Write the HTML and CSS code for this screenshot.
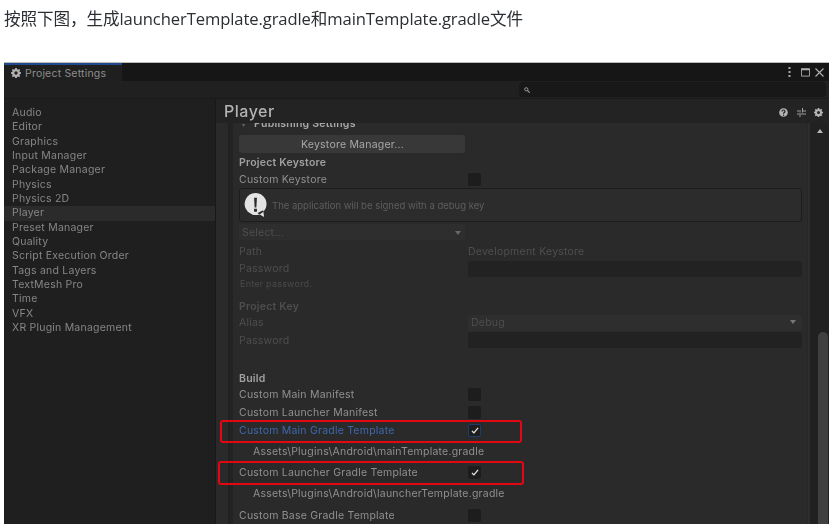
FILE: index.html
```html
<!DOCTYPE html>
<html lang="zh">
<head>
<meta charset="utf-8">
<title>Project Settings</title>
<link rel="stylesheet" href="styles.css">
</head>
<body>
<p class="intro">按照下图，生成launcherTemplate.gradle和mainTemplate.gradle文件</p>
<div class="window">
  <div class="tabbar">
    <div class="tab">
      <svg class="gear" viewBox="0 0 12 12"><path fill="#b4b4b4" fill-rule="evenodd" d="M5 0h2l.3 1.500 1.100.5 1.300-.9 1.300 1.400-.9 1.300.4 1.100 1.500.2v1.900l-1.500.3-.4 1.100.9 1.300-1.300 1.400-1.300-.9-1.100.4L7 12H5l-.3-1.400-1.100-.4-1.300.9L1 9.700l.9-1.300-.4-1.100L0 7V5.100l1.500-.3.4-1.100L1 2.500l1.300-1.400 1.300.9 1.100-.5zM6 4a2 2 0 1 0 0 4 2 2 0 0 0 0-4z"/></svg>
      <span>Project Settings</span>
    </div>
    <div class="winbtns">
      <svg class="kebab" viewBox="0 0 3 10"><path fill="#a8a8a8" d="M.5 0h2v2h-2zM.5 4h2v2h-2zM.5 8h2v2h-2z"/></svg>
      <svg class="maxi" viewBox="0 0 10 9"><path fill="none" stroke="#b0b0b0" d="M.5.500h9v8h-9z"/><path fill="#b0b0b0" d="M0 0h10v2H0z"/></svg>
      <svg class="closex" viewBox="0 0 9 9"><path fill="none" stroke="#b0b0b0" stroke-width="1.100" d="M.5.500l8 8M8.500.500l-8 8"/></svg>
    </div>
  </div>
  <div class="toolbar">
    <div class="search">
      <svg class="lens" viewBox="0 0 6 6"><circle cx="2.300" cy="2.300" r="1.600" fill="none" stroke="#999" stroke-width="1"/><path stroke="#999" stroke-width="1.100" d="M3.500 3.500L5.700 5.700"/></svg>
    </div>
  </div>
  <div class="panes">
    <nav class="sidebar">
      <div class="navitem">Audio</div>
      <div class="navitem">Editor</div>
      <div class="navitem">Graphics</div>
      <div class="navitem">Input Manager</div>
      <div class="navitem">Package Manager</div>
      <div class="navitem">Physics</div>
      <div class="navitem">Physics 2D</div>
      <div class="navitem selected">Player</div>
      <div class="navitem">Preset Manager</div>
      <div class="navitem">Quality</div>
      <div class="navitem">Script Execution Order</div>
      <div class="navitem">Tags and Layers</div>
      <div class="navitem">TextMesh Pro</div>
      <div class="navitem">Time</div>
      <div class="navitem">VFX</div>
      <div class="navitem">XR Plugin Management</div>
    </nav>
    <main class="main">
      <header class="head">
        <h1>Player</h1>
        <div class="headicons">
          <svg class="hicon" viewBox="0 0 9 9"><circle cx="4.500" cy="4.500" r="4.300" fill="#b4b4b4"/><path fill="none" stroke="#222" stroke-width="1.200" d="M3 3.500c0-2 3-2 3 0 0 1-1.500 1-1.500 2.200"/><path fill="#222" d="M4 6.600h1.100v1.100H4z"/></svg>
          <svg class="hicon" viewBox="0 0 9 9"><path stroke="#a0a0a0" stroke-width="1" fill="none" d="M0 3h4M6 3h3M5.500 0v4.500M0 6h2M4 6h5M3 4.500V9"/></svg>
          <svg class="hicon" viewBox="0 0 12 12"><path fill="#b4b4b4" fill-rule="evenodd" d="M5 0h2l.3 1.500 1.100.5 1.300-.9 1.300 1.400-.9 1.300.4 1.100 1.500.2v1.900l-1.500.3-.4 1.100.9 1.300-1.300 1.400-1.300-.9-1.100.4L7 12H5l-.3-1.400-1.100-.4-1.300.9L1 9.700l.9-1.300-.4-1.100L0 7V5.100l1.500-.3.4-1.100L1 2.500l1.300-1.400 1.300.9 1.100-.5zM6 4a2 2 0 1 0 0 4 2 2 0 0 0 0-4z"/></svg>
        </div>
      </header>
      <div class="body">
        <div class="content">
          <div class="rail"></div>
          <div class="form">
            <div class="pub"><span class="tri">▾</span><b>Publishing Settings</b></div>
            <div class="btn">Keystore Manager...</div>
            <div class="row strong">Project Keystore</div>
            <div class="row h17"><span class="label">Custom Keystore</span><span class="cb"></span></div>
            <div class="help">
              <svg class="bubble" viewBox="0 0 24 25"><path fill="#e4e4e4" d="M12 0a11.500 11.500 0 1 1 0 23c-1 0-2-.1-3-.4L4 19.500A11.500 11.500 0 0 1 12 0z M14 21l7 4-1-7z"/><path fill="#2a2a2a" d="M10.500 5h3l-.6 10h-1.800zM10.500 16.500h3v3h-3z"/></svg>
              <span>The application will be signed with a debug key</span>
            </div>
            <div class="select dim">Select...<i class="caret"></i></div>
            <div class="row dim gap-path"><span class="label">Path</span><span>Development Keystore</span></div>
            <div class="row h17 dim"><span class="label">Password</span><span class="input"></span></div>
            <div class="hint">Enter password.</div>
            <div class="row dim strong gap-key">Project Key</div>
            <div class="row h16 dim"><span class="label lifted">Alias</span><span class="drop">Debug<i class="caret"></i></span></div>
            <div class="row h16 dim gap-pw"><span class="label">Password</span><span class="input"></span></div>
            <div class="row strong gap-build">Build</div>
            <div class="row h17 gap-cmm"><span class="label">Custom Main Manifest</span><span class="cb"></span></div>
            <div class="row h17 gap-pw"><span class="label">Custom Launcher Manifest</span><span class="cb"></span></div>
            <div class="row marked">
              <span class="label blue">Custom Main Gradle Template</span>
              <span class="cb focus"><svg class="tick" viewBox="0 0 9 8"><path fill="none" stroke="#e4e4e4" stroke-width="1.500" d="M1 4.500l2.300 2.200L8 1"/></svg></span>
              <i class="redbox one"></i>
            </div>
            <div class="row path">Assets\Plugins\Android\mainTemplate.gradle</div>
            <div class="row marked">
              <span class="label">Custom Launcher Gradle Template</span>
              <span class="cb"><svg class="tick" viewBox="0 0 9 8"><path fill="none" stroke="#e4e4e4" stroke-width="1.500" d="M1 4.500l2.300 2.200L8 1"/></svg></span>
              <i class="redbox two"></i>
            </div>
            <div class="row path">Assets\Plugins\Android\launcherTemplate.gradle</div>
            <div class="row gap-base"><span class="label">Custom Base Gradle Template</span><span class="cb"></span></div>
          </div>
        </div>
        <div class="scroll">
          <svg class="up" viewBox="0 0 6 4"><path fill="#b8b8b8" d="M3 0l3 4H0z"/></svg>
          <div class="thumb"></div>
        </div>
      </div>
    </main>
  </div>
</div>
</body>
</html>
```

FILE: styles.css
```css
* { box-sizing: border-box; }
html, body { margin: 0; padding: 0; background: #fff; }
body { width: 830px; height: 526px; overflow: hidden; font-family: Inter, "Noto Sans CJK SC", sans-serif; }
.intro { margin: 0; height: 63px; padding: 10px 0 0 4px; font-size: 16.6px; line-height: 18px; color: #2b2f33; font-family: "Open Sans", "Noto Sans CJK SC", sans-serif; letter-spacing: -0.1px; filter: blur(.35px); }
.window { margin-left: 4px; width: 825px; height: 461px; background: #2a2a2a; display: flex; flex-direction: column; overflow: hidden; font-size: 10.5px; letter-spacing: .22px; color: #909090; filter: blur(.65px); box-shadow: 0 -1px 0 #bbb; }
.tabbar { height: 18px; flex: none; background: #161616; display: flex; justify-content: space-between; }
.tab { width: 118px; background: #1f1f1f; border-top: 2px solid #214a8e; padding-left: 7px; display: flex; align-items: center; gap: 4px; color: #8e8e8e; font-size: 10.5px; letter-spacing: .2px; }
.gear { width: 10px; height: 10px; }
.winbtns { display: flex; align-items: center; gap: 0; padding-right: 5px; }
.kebab { width: 3px; height: 10px; margin-right: 10px; }
.maxi { width: 9px; height: 9px; margin-right: 5px; }
.closex { width: 9px; height: 9px; }
.toolbar { height: 18px; flex: none; background: #202020; border-bottom: 1px solid #1a1a1a; display: flex; justify-content: flex-end; padding: 1px 3px 2px 0; }
.search { width: 307px; height: 15px; background: #181818; border-radius: 4px; padding-left: 5px; display: flex; align-items: center; }
.lens { width: 6px; height: 6px; }
.panes { flex: 1; display: flex; min-height: 0; }
.sidebar { width: 212px; flex: none; background: #1f1f1f; border-right: 1px solid #181818; padding-top: 7px; }
.navitem { height: 14.33px; line-height: 14.33px; padding-left: 8px; color: #868686; }
.navitem.selected { background: #2b2b2b; }
.main { flex: 1; min-width: 0; display: flex; flex-direction: column; }
.head { height: 24px; flex: none; background: #232323; display: flex; justify-content: space-between; align-items: center; padding: 0 6px 0 8px; }
.head h1 { margin: 0; font-size: 16px; font-weight: 500; letter-spacing: .5px; color: #b4b4b4; }
.headicons { display: flex; gap: 8.500px; align-items: center; padding-top: 3px; }
.hicon { width: 9px; height: 9px; }
.body { flex: 1; display: flex; min-height: 0; }
.content { flex: 1; min-width: 0; display: flex; background: #2a2a2a; }
.rail { width: 17px; flex: none; margin-left: 12px; border-left: 1px solid #1f1f1f; box-shadow: inset 4px 0 0 #232323; margin-right: -6px; }
.form { flex: 1; min-width: 0; padding-right: 4px; }
.pub { height: 7px; line-height: 2px; overflow: hidden; color: #a8a8a8; }
.pub b { font-weight: 600; }
.tri { display: inline-block; width: 7px; margin-left: 3px; margin-right: 5px; font-size: 6px; color: #666; }
.btn { width: 226px; height: 18px; margin-top: 5px; background: #383838; border-radius: 3px; text-align: center; line-height: 20px; color: #a8a8a8; padding-left: 1px; }
.row { height: 18px; display: flex; align-items: center; position: relative; }
.row.h17 { height: 17px; }
.row.h16 { height: 16px; }
.strong { font-weight: 600; color: #a0a0a0; }
.label { width: 229px; flex: none; }
.lifted { margin-bottom: 2px; }
.blue { color: #3d68ad; }
.dim { color: #4e4e4e; }
.dim.strong { color: #4e4e4e; }
.cb { width: 13px; height: 13px; background: #1d1d1d; border-radius: 2px; display: flex; align-items: center; justify-content: center; }
.cb.focus { border: 1px solid #1f3d6b; }
.tick { width: 8px; height: 7px; }
.help { width: 563px; height: 34px; border: 1px solid #1c1c1c; border-radius: 3px; background: #2c2c2c; display: flex; align-items: center; gap: 5px; padding-left: 4px; color: #5e5e5e; font-size: 9.5px; letter-spacing: 0; }
.bubble { width: 23px; height: 24px; }
.select { width: 226px; height: 16px; margin-top: 2px; background: #2e2e2e; border-radius: 3px; padding: 1px 3px 0; display: flex; justify-content: space-between; align-items: center; }
.caret { width: 0; height: 0; border-left: 3px solid transparent; border-right: 3px solid transparent; border-top: 4px solid #686868; margin-right: 1px; }
.input { width: 334px; height: 16px; background: #222; border-radius: 3px; }
.drop { width: 334px; height: 16px; background: #2e2e2e; border-radius: 3px; padding: 0 3px 2px; display: flex; justify-content: space-between; align-items: center; }
.drop .caret { border-top-color: #777; margin-right: 3px; }
.hint { height: 14px; line-height: 14px; padding-left: 1px; font-size: 9px; color: #4a4a4a; }
.gap-path { margin-top: 2px; }
.gap-key { margin-top: 6px; }
.gap-pw { margin-top: 1px; }
.gap-build { margin-top: 21px; }
.gap-cmm { margin-top: -1px; }
.path { padding-left: 14px; margin-top: 3px; }
.path + .marked { margin-top: 3px; }
.gap-base { margin-top: 4px; }
.redbox { position: absolute; border: 2px solid #e30613; border-radius: 3px; pointer-events: none; }
.redbox.one { left: -19px; top: -1px; width: 302px; height: 23px; }
.redbox.two { left: -21px; top: -2px; width: 306px; height: 24px; }
.scroll { width: 22px; flex: none; background: #212121; border-left: 1px solid #272727; position: relative; padding: 6px 0 0 9px; box-shadow: inset 2px 0 0 #2d2d2d; }
.up { display: block; width: 6px; height: 4px; }
.thumb { position: absolute; left: 10px; top: 209px; bottom: -6px; width: 10px; background: #404040; border-radius: 5px 5px 0 0; }
```
